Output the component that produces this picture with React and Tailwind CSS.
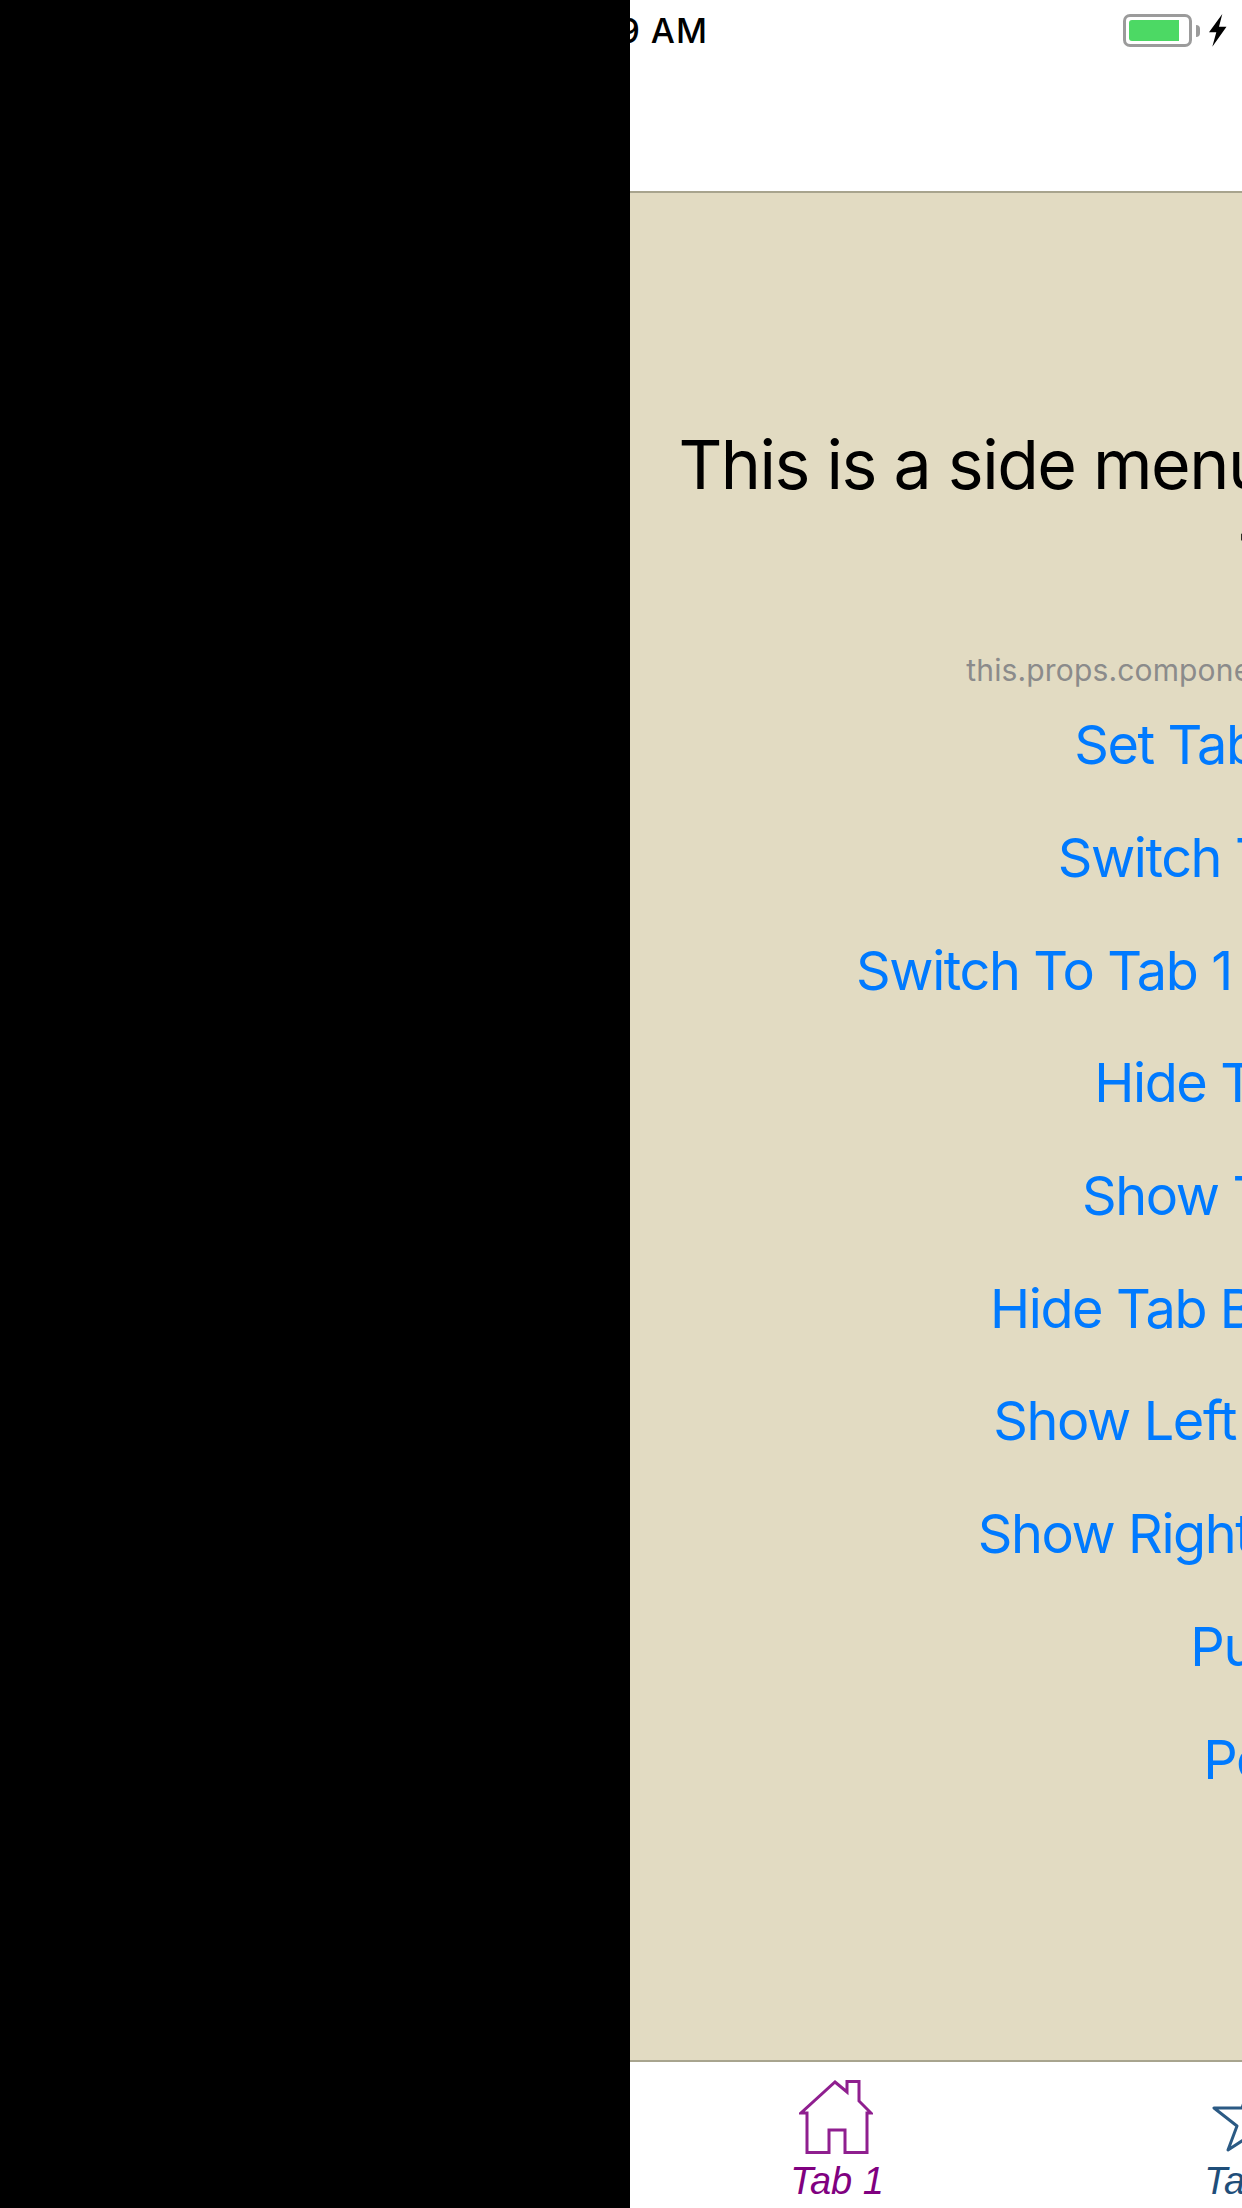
const buttons = [
  'Set Tab Badge',
  'Switch To Tab 2',
  'Switch To Tab 1 by componentID',
  'Hide Top Bar',
  'Show Top Bar',
  'Hide Tab Bar on Push',
  'Show Left Side Menu',
  'Show Right Side Menu',
  'Push',
  'Pop',
];

function Battery() {
  return (
    <div className="flex items-center gap-[4px]">
      <div className="h-[33px] w-[69px] rounded-[7px] border-[3px] border-[#9b9b9b] p-[3px]">
        <div className="h-full w-[50px] rounded-l-[3px] bg-[#4cd964]" />
      </div>
      <div className="h-[12px] w-[4px] rounded-r-full bg-[#9b9b9b]" />
    </div>
  );
}

function Bolt() {
  return (
    <svg width="18" height="33" viewBox="0 0 18 33" fill="#000">
      <path d="M13.3 0 L0 18.3 L7.3 18.3 L3.3 32.7 L17.5 12.7 L10 12.7 Z" />
    </svg>
  );
}

function HomeIcon() {
  return (
    <svg width="74" height="74" viewBox="0 0 74 74" fill="none" stroke="#8f1f8f" strokeWidth="3" className="-translate-x-[1px]">
      <path d="M36 2 L48 12 L48 1.5 L60 1.5 L60 21 L72 33 L68 33 L68 72.5 L46 72.5 L46 50 L30 50 L30 72.5 L8 72.5 L8 33 L2 33 Z" />
    </svg>
  );
}

function StarIcon() {
  return (
    <svg width="78" height="74" viewBox="0 0 78 74" fill="none" stroke="#2b5a84" strokeWidth="3" strokeLinejoin="round">
      <path d="M39 2 L48 28 L76 28 L53 46 L62 70 L39 55 L16 70 L25 46 L2 28 L30 28 Z" />
    </svg>
  );
}

function Tab({ label, color, children }) {
  return (
    <div className="flex w-[414px] flex-col items-center pt-[18px]">
      {children}
      <span className={`mt-[5px] font-['Liberation_Sans',sans-serif] text-[38px] leading-[44px] italic ${color}`}>{label}</span>
    </div>
  );
}

export default function App() {
  return (
    <div className="flex h-[2208px] w-[1242px] overflow-hidden bg-black font-['Inter',sans-serif]">
      {/* side menu panel is black here */}
      <div className="w-[630px] shrink-0 bg-black" />
      <div className="flex w-[1242px] shrink-0 flex-col bg-white">
        <div className="h-[193px] shrink-0 overflow-hidden border-b-2 border-[#a8a48e] bg-white">
          <div className="ml-[-630px] flex w-[1242px] items-center pt-[14px]">
            <div className="flex w-[708px] justify-end">
              <span className="text-[34px] leading-[33px] font-medium tracking-[1px] whitespace-nowrap text-black">3:59 AM</span>
            </div>
            <div className="flex flex-1 items-center justify-end gap-[9px] pr-[15px]">
              <Battery />
              <Bolt />
            </div>
          </div>
        </div>
        <div className="flex flex-1 flex-col items-center bg-[#e2dbc2] pt-[228px]">
          <p className="w-[1180px] text-center text-[68px] leading-[86px] tracking-[-1.5px] text-black">
            This is a side menu center screen tab 1
          </p>
          <p className="mt-[59px] text-[30px] leading-[36px] tracking-[0.15px] text-[#8b8b8b]">this.props.componentId = component12</p>
          <div className="mt-[1px] flex flex-col items-center">
            {buttons.map((b) => (
              <button key={b} type="button" className="h-[112.7px] text-[54px] leading-[64px] tracking-[-1.4px] text-[#007aff]">
                {b}
              </button>
            ))}
          </div>
        </div>
        <div className="flex h-[148px] shrink-0 border-t-2 border-[#a8a48e] bg-white">
          <Tab label="Tab 1" color="text-[#800080]">
            <HomeIcon />
          </Tab>
          <Tab label="Tab 2" color="text-[#1f4e79]">
            <StarIcon />
          </Tab>
        </div>
      </div>
    </div>
  );
}
